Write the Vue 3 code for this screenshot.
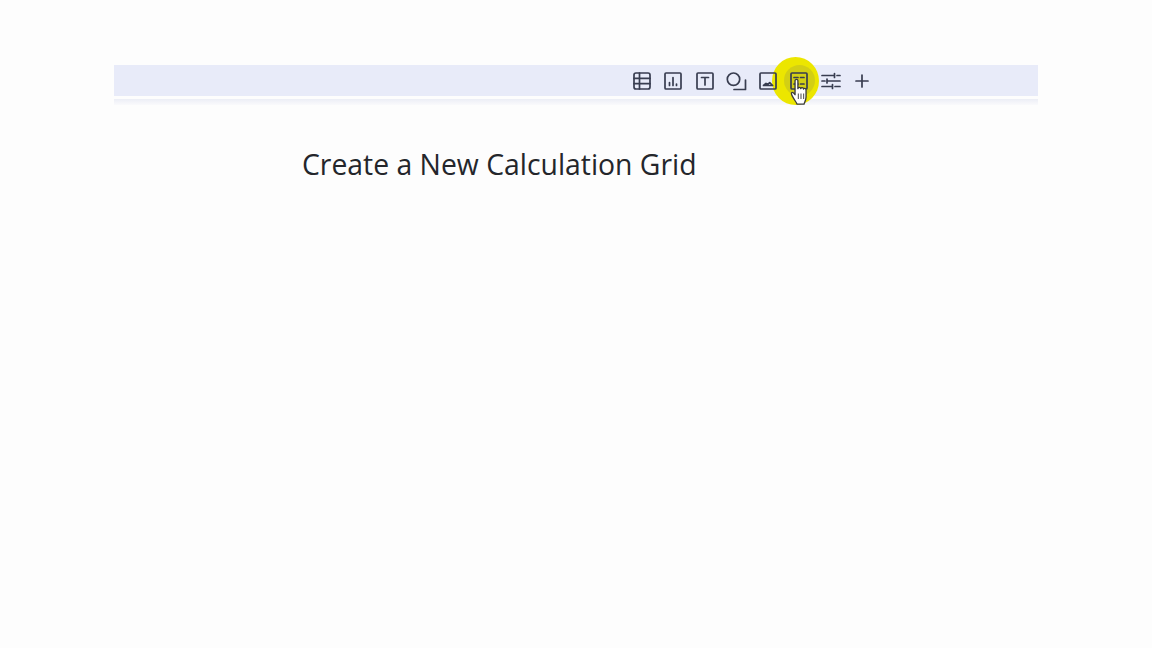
<script setup>
const box = 'M3 4A1 1 0 0 1 4 3h14A1 1 0 0 1 19 4v14a1 1 0 0 1-1 1h-14A1 1 0 0 1 3 18z'
const icons = [
  { id: 'table', paths: ['M3 5A2 2 0 0 1 5 3h12A2 2 0 0 1 19 5v12a2 2 0 0 1-2 2h-12A2 2 0 0 1 3 17z', 'M3 8.300h16M3 13.700h16M8.500 3v16'] },
  { id: 'chart', paths: [box, 'M7.500 15.500v-3M11 15.500v-8M14.500 15.500v-1.500'] },
  { id: 'text', paths: [box, 'M7.500 7.500h7M11 7.500v7.500'] },
  { id: 'shapes', paths: ['M8.500 3a6.200 6.200 0 1 1 0 12.400a6.200 6.200 0 0 1 0-12.400z', 'M20.500 10V19.500H9'] },
  { id: 'image', paths: [box, 'M6.500 15.500l2.500-2 1.500 1.200 2.200-2 3 2.800z'] },
  { id: 'grid', hover: true, paths: [box, 'M6 7.500h4M12.500 7.500h3.500M6 14h4M12.500 14h3.500'] },
  { id: 'sliders', paths: ['M2 5.500h12M17 5.500h3M2 11h3M8 11h12M2 16.500h10M15 16.500h5M14.500 3.500v4M7 9v4M12.500 14.500v4'] },
  { id: 'plus', paths: ['M11 5v12M5 11h12'] }
]
</script>

<template>
  <div class="page">
    <div class="toolbar-wrap">
      <div class="toolbar">
        <div class="spot"></div>
        <button v-for="icon in icons" :key="icon.id" class="tool" :class="{ hover: icon.hover }" type="button">
          <svg width="22" height="22" viewBox="0 0 22 22" fill="none" stroke="#383d50" stroke-width="1.700" stroke-linecap="round" stroke-linejoin="round">
            <path v-for="(d, i) in icon.paths" :key="i" :d="d" />
          </svg>
        </button>
        <svg class="cursor" width="22" height="31" viewBox="0 0 20 28">
          <path d="M5.500 3.200c0-1.500 2.600-1.500 2.600 0v7.300c.2-1.500 2.500-1.500 2.600 0 .2-1.200 2.400-1.200 2.500.4.400-1 2.300-.9 2.300.8v6.300c0 3-1.600 5.200-1.800 6.500H7.200c-.5-1.700-2-3.200-3.800-6.500-.9-1.600-1.600-3.200-1-3.800.8-.7 2 .2 3.100 1.800z" fill="#fff" stroke="#3a3a3a" stroke-width="1.200" stroke-linejoin="round" />
          <path d="M8.500 15v5M10.900 15v5M13.300 15v5" stroke="#5a5a5a" stroke-width="1" fill="none" />
        </svg>
      </div>
      <div class="under"></div>
    </div>
    <h1 class="title">Create a New Calculation Grid</h1>
  </div>
</template>

<style>
html, body { margin: 0; background: #fdfdfd; }
</style>

<style scoped>
.page {
  width: 1152px;
  height: 648px;
  overflow: hidden;
  box-sizing: border-box;
  padding: 65px 114px 0;
  background: #fdfdfd;
  font-family: "Open Sans", sans-serif;
}
.toolbar-wrap { display: flex; flex-direction: column; }
.toolbar {
  position: relative;
  height: 31px;
  display: flex;
  align-items: center;
  padding-left: 512px;
  background: #e8ebf9;
}
.under {
  height: 6px;
  margin-top: 3px;
  background: linear-gradient(#eceef6, #fafafc);
}
.tool {
  position: relative;
  flex: 0 0 31.500px;
  height: 31px;
  padding: 0;
  border: 0;
  background: none;
  display: flex;
  align-items: center;
  justify-content: center;
}
.tool.hover::before {
  content: "";
  position: absolute;
  left: 0;
  top: 0;
  width: 31px;
  height: 31px;
  border-radius: 50%;
  background: #d3cf14;
}
.tool svg { position: relative; }
.spot {
  position: absolute;
  left: 658px;
  top: -8px;
  width: 47px;
  height: 48px;
  border-radius: 50%;
  background: #ece600;
}
.cursor {
  position: absolute;
  left: 675px;
  top: 12px;
}
.title {
  margin: 39px 0 0 188px;
  font-size: 28.350px;
  line-height: 40px;
  font-weight: 400;
  color: #24262b;
  white-space: nowrap;
}
</style>
